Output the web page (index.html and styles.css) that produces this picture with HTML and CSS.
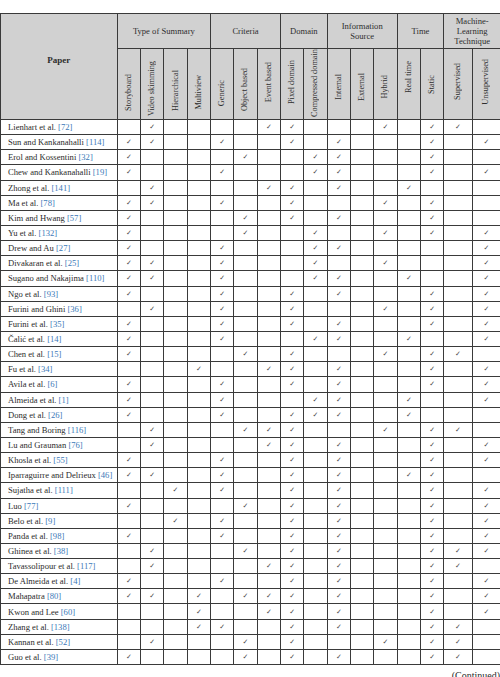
FILE: index.html
```html
<!DOCTYPE html>
<html>
<head>
<meta charset="utf-8">
<link rel="stylesheet" href="styles.css">
</head>
<body>
<table class="grid">
<colgroup>
<col class="cp">
<col class="cn"><col class="cn"><col class="cn"><col class="cn">
<col class="cn"><col class="cn"><col class="cn">
<col class="cn"><col class="cn">
<col class="cn"><col class="cn"><col class="cn">
<col class="cn"><col class="cn">
<col class="cw"><col class="cw">
</colgroup>
<thead>
<tr class="g">
<th rowspan="2" class="paper">Paper</th>
<th colspan="4">Type of Summary</th>
<th colspan="3">Criteria</th>
<th colspan="2">Domain</th>
<th colspan="3">Information<br>Source</th>
<th colspan="2">Time</th>
<th colspan="2">Machine-<br>Learning<br>Technique</th>
</tr>
<tr class="s">
<th class="v d10"><span>Storyboard</span></th>
<th class="v d6"><span>Video skimming</span></th>
<th class="v d8"><span>Hierarchical</span></th>
<th class="v d9"><span>Multiview</span></th>
<th class="v d10"><span>Generic</span></th>
<th class="v d7"><span>Object based</span></th>
<th class="v u2"><span>Event based</span></th>
<th class="v u2"><span>Pixel domain</span></th>
<th class="v top"><span>Compressed domain</span></th>
<th class="v d3"><span>Internal</span></th>
<th class="v d3"><span>External</span></th>
<th class="v d3"><span>Hybrid</span></th>
<th class="v u7"><span>Real time</span></th>
<th class="v d1"><span>Static</span></th>
<th class="v u2"><span>Supervised</span></th>
<th class="v u2"><span>Unsupervised</span></th>
</tr>
</thead>
<tbody>
<tr><td class="p">Lienhart et al. <span class="ref">[72]</span></td><td></td><td>✓</td><td></td><td></td><td></td><td></td><td>✓</td><td>✓</td><td></td><td></td><td></td><td>✓</td><td></td><td>✓</td><td>✓</td><td></td></tr>
<tr><td class="p">Sun and Kankanahalli <span class="ref">[114]</span></td><td>✓</td><td>✓</td><td></td><td></td><td>✓</td><td></td><td></td><td>✓</td><td></td><td>✓</td><td></td><td></td><td></td><td>✓</td><td></td><td>✓</td></tr>
<tr><td class="p">Erol and Kossentini <span class="ref">[32]</span></td><td>✓</td><td></td><td></td><td></td><td></td><td>✓</td><td></td><td></td><td>✓</td><td>✓</td><td></td><td></td><td></td><td>✓</td><td></td><td></td></tr>
<tr><td class="p">Chew and Kankanahalli <span class="ref">[19]</span></td><td>✓</td><td></td><td></td><td></td><td>✓</td><td></td><td></td><td></td><td>✓</td><td>✓</td><td></td><td></td><td></td><td>✓</td><td></td><td>✓</td></tr>
<tr><td class="p">Zhong et al. <span class="ref">[141]</span></td><td></td><td>✓</td><td></td><td></td><td></td><td></td><td>✓</td><td>✓</td><td></td><td>✓</td><td></td><td></td><td>✓</td><td></td><td></td><td></td></tr>
<tr><td class="p">Ma et al. <span class="ref">[78]</span></td><td>✓</td><td>✓</td><td></td><td></td><td>✓</td><td></td><td></td><td>✓</td><td></td><td></td><td></td><td>✓</td><td></td><td>✓</td><td></td><td></td></tr>
<tr><td class="p">Kim and Hwang <span class="ref">[57]</span></td><td>✓</td><td></td><td></td><td></td><td></td><td>✓</td><td></td><td>✓</td><td></td><td>✓</td><td></td><td></td><td></td><td>✓</td><td></td><td></td></tr>
<tr><td class="p">Yu et al. <span class="ref">[132]</span></td><td>✓</td><td></td><td></td><td></td><td></td><td>✓</td><td></td><td></td><td>✓</td><td></td><td></td><td>✓</td><td></td><td>✓</td><td></td><td>✓</td></tr>
<tr><td class="p">Drew and Au <span class="ref">[27]</span></td><td>✓</td><td></td><td></td><td></td><td>✓</td><td></td><td></td><td></td><td>✓</td><td>✓</td><td></td><td></td><td></td><td></td><td></td><td>✓</td></tr>
<tr><td class="p">Divakaran et al. <span class="ref">[25]</span></td><td>✓</td><td>✓</td><td></td><td></td><td>✓</td><td></td><td></td><td></td><td>✓</td><td></td><td></td><td>✓</td><td></td><td></td><td></td><td>✓</td></tr>
<tr><td class="p">Sugano and Nakajima <span class="ref">[110]</span></td><td>✓</td><td>✓</td><td></td><td></td><td>✓</td><td></td><td></td><td></td><td>✓</td><td>✓</td><td></td><td></td><td>✓</td><td></td><td></td><td>✓</td></tr>
<tr><td class="p">Ngo et al. <span class="ref">[93]</span></td><td>✓</td><td></td><td></td><td></td><td>✓</td><td></td><td></td><td>✓</td><td></td><td>✓</td><td></td><td></td><td></td><td>✓</td><td></td><td>✓</td></tr>
<tr><td class="p">Furini and Ghini <span class="ref">[36]</span></td><td></td><td>✓</td><td></td><td></td><td>✓</td><td></td><td></td><td>✓</td><td></td><td></td><td></td><td>✓</td><td></td><td>✓</td><td></td><td>✓</td></tr>
<tr><td class="p">Furini et al. <span class="ref">[35]</span></td><td>✓</td><td></td><td></td><td></td><td>✓</td><td></td><td></td><td>✓</td><td></td><td>✓</td><td></td><td></td><td></td><td>✓</td><td></td><td>✓</td></tr>
<tr><td class="p">Čalić et al. <span class="ref">[14]</span></td><td>✓</td><td></td><td></td><td></td><td>✓</td><td></td><td></td><td></td><td>✓</td><td>✓</td><td></td><td></td><td>✓</td><td></td><td></td><td>✓</td></tr>
<tr><td class="p">Chen et al. <span class="ref">[15]</span></td><td>✓</td><td></td><td></td><td></td><td></td><td>✓</td><td></td><td>✓</td><td></td><td></td><td></td><td>✓</td><td></td><td>✓</td><td>✓</td><td></td></tr>
<tr><td class="p">Fu et al. <span class="ref">[34]</span></td><td></td><td></td><td></td><td>✓</td><td></td><td></td><td>✓</td><td>✓</td><td></td><td>✓</td><td></td><td></td><td></td><td>✓</td><td></td><td>✓</td></tr>
<tr><td class="p">Avila et al. <span class="ref">[6]</span></td><td>✓</td><td></td><td></td><td></td><td>✓</td><td></td><td></td><td>✓</td><td></td><td>✓</td><td></td><td></td><td></td><td>✓</td><td></td><td>✓</td></tr>
<tr><td class="p">Almeida et al. <span class="ref">[1]</span></td><td>✓</td><td></td><td></td><td></td><td>✓</td><td></td><td></td><td></td><td>✓</td><td>✓</td><td></td><td></td><td>✓</td><td></td><td></td><td>✓</td></tr>
<tr><td class="p">Dong et al. <span class="ref">[26]</span></td><td>✓</td><td></td><td></td><td></td><td>✓</td><td></td><td></td><td>✓</td><td>✓</td><td>✓</td><td></td><td></td><td>✓</td><td></td><td></td><td></td></tr>
<tr><td class="p">Tang and Boring <span class="ref">[116]</span></td><td></td><td>✓</td><td></td><td></td><td></td><td>✓</td><td>✓</td><td>✓</td><td></td><td></td><td></td><td>✓</td><td></td><td>✓</td><td>✓</td><td></td></tr>
<tr><td class="p">Lu and Grauman <span class="ref">[76]</span></td><td></td><td>✓</td><td></td><td></td><td></td><td></td><td>✓</td><td>✓</td><td></td><td>✓</td><td></td><td></td><td></td><td>✓</td><td></td><td>✓</td></tr>
<tr><td class="p">Khosla et al. <span class="ref">[55]</span></td><td>✓</td><td></td><td></td><td></td><td>✓</td><td></td><td></td><td>✓</td><td></td><td>✓</td><td></td><td></td><td></td><td>✓</td><td></td><td>✓</td></tr>
<tr><td class="p">Iparraguirre and Delrieux <span class="ref">[46]</span></td><td>✓</td><td>✓</td><td></td><td></td><td>✓</td><td></td><td></td><td>✓</td><td></td><td>✓</td><td></td><td></td><td>✓</td><td>✓</td><td></td><td></td></tr>
<tr><td class="p">Sujatha et al. <span class="ref">[111]</span></td><td></td><td></td><td>✓</td><td></td><td>✓</td><td></td><td></td><td>✓</td><td></td><td>✓</td><td></td><td></td><td></td><td>✓</td><td></td><td>✓</td></tr>
<tr><td class="p">Luo <span class="ref">[77]</span></td><td>✓</td><td></td><td></td><td></td><td></td><td>✓</td><td></td><td>✓</td><td></td><td>✓</td><td></td><td></td><td></td><td>✓</td><td></td><td>✓</td></tr>
<tr><td class="p">Belo et al. <span class="ref">[9]</span></td><td></td><td></td><td>✓</td><td></td><td>✓</td><td></td><td></td><td>✓</td><td></td><td>✓</td><td></td><td></td><td></td><td>✓</td><td></td><td>✓</td></tr>
<tr><td class="p">Panda et al. <span class="ref">[98]</span></td><td>✓</td><td></td><td></td><td></td><td>✓</td><td></td><td></td><td>✓</td><td></td><td>✓</td><td></td><td></td><td></td><td>✓</td><td></td><td>✓</td></tr>
<tr><td class="p">Ghinea et al. <span class="ref">[38]</span></td><td></td><td>✓</td><td></td><td></td><td></td><td>✓</td><td></td><td>✓</td><td></td><td>✓</td><td></td><td></td><td></td><td>✓</td><td>✓</td><td>✓</td></tr>
<tr><td class="p">Tavassolipour et al. <span class="ref">[117]</span></td><td></td><td>✓</td><td></td><td></td><td></td><td></td><td>✓</td><td>✓</td><td></td><td>✓</td><td></td><td></td><td></td><td>✓</td><td>✓</td><td></td></tr>
<tr><td class="p">De Almeida et al. <span class="ref">[4]</span></td><td>✓</td><td></td><td></td><td></td><td>✓</td><td></td><td></td><td>✓</td><td></td><td>✓</td><td></td><td></td><td></td><td>✓</td><td></td><td>✓</td></tr>
<tr><td class="p">Mahapatra <span class="ref">[80]</span></td><td>✓</td><td>✓</td><td></td><td>✓</td><td></td><td>✓</td><td>✓</td><td>✓</td><td></td><td>✓</td><td></td><td></td><td></td><td>✓</td><td></td><td>✓</td></tr>
<tr><td class="p">Kwon and Lee <span class="ref">[60]</span></td><td></td><td></td><td></td><td>✓</td><td></td><td></td><td>✓</td><td>✓</td><td></td><td>✓</td><td></td><td></td><td></td><td>✓</td><td></td><td>✓</td></tr>
<tr><td class="p">Zhang et al. <span class="ref">[138]</span></td><td></td><td></td><td></td><td>✓</td><td>✓</td><td></td><td></td><td>✓</td><td></td><td>✓</td><td></td><td></td><td></td><td>✓</td><td>✓</td><td></td></tr>
<tr><td class="p">Kannan et al. <span class="ref">[52]</span></td><td></td><td>✓</td><td></td><td></td><td></td><td>✓</td><td></td><td>✓</td><td></td><td></td><td></td><td>✓</td><td></td><td>✓</td><td>✓</td><td></td></tr>
<tr><td class="p">Guo et al. <span class="ref">[39]</span></td><td>✓</td><td></td><td></td><td></td><td></td><td>✓</td><td></td><td>✓</td><td></td><td>✓</td><td></td><td></td><td></td><td>✓</td><td>✓</td><td></td></tr>
</tbody>
</table>
<div class="cont">(Continued)</div>
</body>
</html>
```

FILE: styles.css
```css
html, body {
  margin: 0;
  padding: 0;
  background: #ffffff;
}
body {
  width: 500px;
  height: 677px;
  overflow: hidden;
  font-family: "Liberation Serif", "DejaVu Serif", serif;
  color: #2b2b2b;
}
.grid {
  margin-top: 13px;
  width: 500px;
  table-layout: fixed;
  border-collapse: collapse;
  font-size: 8.6px;
}
.cp { width: 116.7px; }
.cn { width: 23.33px; }
.cw { width: 28.35px; }
.grid th,
.grid td {
  border: 1px solid #3a3a3a;
  padding: 0;
}
.grid thead th {
  background: #d1d1d1;
  font-weight: normal;
  color: #2e2e2e;
  line-height: 10px;
  text-align: center;
  vertical-align: middle;
  box-sizing: border-box;
}
.grid thead th.paper {
  font-weight: bold;
  font-size: 9px;
  padding-bottom: 12px;
}
.g { height: 34.7px; }
.s { height: 71.3px; }
.s th {
  font-size: 8.3px;
}
.v span {
  display: block;
  width: 10px;
  margin: 0 auto;
  writing-mode: vertical-rl;
  transform: rotate(180deg);
  white-space: nowrap;
  line-height: 10px;
}
.s th.d10 { padding-top: 18px; }
.s th.d9 { padding-top: 16px; }
.s th.d8 { padding-top: 14px; }
.s th.d7 { padding-top: 12px; }
.s th.d6 { padding-top: 10px; }
.s th.d3 { padding-top: 6px; }
.s th.d1 { padding-top: 2px; }
.s th.u2 { padding-bottom: 4px; }
.s th.u7 { padding-bottom: 14px; }
.s th.top { vertical-align: top; }
.grid tbody td {
  height: 14.15px;
  text-align: center;
  vertical-align: middle;
  font-family: "DejaVu Sans", sans-serif;
  font-size: 7px;
  color: #4a4a4a;
  line-height: 8px;
}
.grid tbody td.p {
  text-align: left;
  padding-left: 7px;
  white-space: nowrap;
  font-family: "Liberation Serif", "DejaVu Serif", serif;
  font-size: 8.6px;
  color: #2b2b2b;
}
.ref { color: #3b78b8; }
.cont {
  margin-top: 5px;
  text-align: right;
  font-size: 10px;
  line-height: 12px;
  color: #2b2b2b;
  white-space: nowrap;
}
```
